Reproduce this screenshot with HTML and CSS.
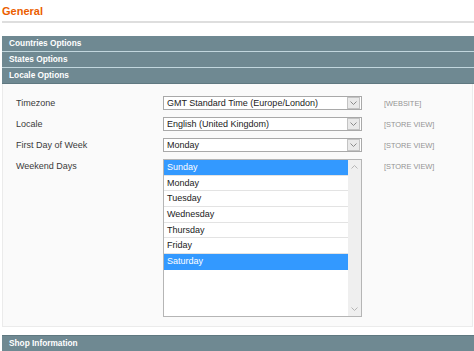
FILE: index.html
```html
<!DOCTYPE html>
<html lang="en">
<head>
    <meta charset="UTF-8">
    <meta name="viewport" content="width=device-width, initial-scale=1.0">
    <title>General Configuration</title>
    <link rel="stylesheet" href="styles.css">
</head>
<body>
    <div class="page">
        <h3 class="title">General</h3>

        <!-- Collapsed sections -->
        <div class="section-head">Countries Options</div>
        <div class="section-head">States Options</div>
        <div class="section-head">Locale Options</div>

        <!-- Locale options fieldset -->
        <div class="fieldset">
            <div class="row">
                <div class="label">Timezone</div>
                <div class="select">
                    <span>GMT Standard Time (Europe/London)</span>
                    <span class="arrow"><svg width="7" height="4" viewBox="0 0 7 4"><path d="M0.5 0.5 L3.5 3.5 L6.5 0.5" fill="none" stroke="#8a8a8a" stroke-width="1"/></svg></span>
                </div>
                <div class="scope">[WEBSITE]</div>
            </div>
            <div class="row">
                <div class="label">Locale</div>
                <div class="select">
                    <span>English (United Kingdom)</span>
                    <span class="arrow"><svg width="7" height="4" viewBox="0 0 7 4"><path d="M0.5 0.5 L3.5 3.5 L6.5 0.5" fill="none" stroke="#8a8a8a" stroke-width="1"/></svg></span>
                </div>
                <div class="scope">[STORE VIEW]</div>
            </div>
            <div class="row">
                <div class="label">First Day of Week</div>
                <div class="select">
                    <span>Monday</span>
                    <span class="arrow"><svg width="7" height="4" viewBox="0 0 7 4"><path d="M0.5 0.5 L3.5 3.5 L6.5 0.5" fill="none" stroke="#8a8a8a" stroke-width="1"/></svg></span>
                </div>
                <div class="scope">[STORE VIEW]</div>
            </div>
            <div class="row">
                <div class="label label-multi">Weekend Days</div>
                <div class="multiselect">
                    <div class="options">
                        <div class="option selected">Sunday</div>
                        <div class="option">Monday</div>
                        <div class="option">Tuesday</div>
                        <div class="option">Wednesday</div>
                        <div class="option">Thursday</div>
                        <div class="option">Friday</div>
                        <div class="option selected last">Saturday</div>
                    </div>
                    <div class="scrollbar">
                        <svg width="7" height="4" viewBox="0 0 7 4"><path d="M0.5 3.5 L3.5 0.5 L6.5 3.5" fill="none" stroke="#b5b5b5" stroke-width="1"/></svg>
                        <svg width="7" height="4" viewBox="0 0 7 4"><path d="M0.5 0.5 L3.5 3.5 L6.5 0.5" fill="none" stroke="#b5b5b5" stroke-width="1"/></svg>
                    </div>
                </div>
                <div class="scope scope-multi">[STORE VIEW]</div>
            </div>
        </div>

        <div class="section-head shop">Shop Information</div>
    </div>
</body>
</html>
```

FILE: styles.css
```css
* {
    box-sizing: border-box;
}

body {
    margin: 0;
    background-color: #fff;
    font-family: "Liberation Sans", Arial, sans-serif;
    color: #333;
}

.page {
    padding-left: 2px;
}

.title {
    margin: 0;
    padding-top: 5px;
    height: 23px;
    line-height: 13px;
    font-size: 11px;
    font-weight: bold;
    color: #eb5e00;
    border-bottom: 2px solid #dedede;
    margin-bottom: 13px;
}

.section-head {
    height: 16px;
    line-height: 15px;
    padding-left: 7px;
    background-color: #6f8992;
    color: #fff;
    font-size: 8.3px;
    font-weight: bold;
    border-bottom: 1px solid #c2d7de;
}

.section-head:nth-child(4) {
    border-bottom: 1px solid #5f7880;
}

.fieldset {
    background-color: #fafafa;
    border: 1px solid #ebebeb;
    border-top: none;
    padding: 12px 0 9px 13px;
    margin-right: 1px;
    margin-bottom: 8px;
}

.row {
    display: flex;
    align-items: center;
    margin-bottom: 7px;
}

.row:last-child {
    margin-bottom: 0;
    align-items: flex-start;
}

.label {
    width: 147px;
    font-size: 9px;
    color: #3a3a3a;
}

.label-multi {
    padding-top: 2px;
}

.select {
    width: 199px;
    height: 14px;
    border: 1px solid #a9a9a9;
    background-color: #fff;
    display: flex;
    align-items: center;
    justify-content: space-between;
    padding: 0 1px 0 3px;
    font-size: 9px;
    color: #222;
}

.arrow {
    width: 13px;
    height: 12px;
    background-color: #e9e9e9;
    border: 1px solid #c3c3c3;
    display: flex;
    align-items: center;
    justify-content: center;
}

.scope {
    margin-left: 22px;
    font-size: 7.4px;
    color: #939393;
}

.scope-multi {
    padding-top: 3px;
}

.multiselect {
    width: 199px;
    height: 158px;
    border: 1px solid #b5b5b5;
    background-color: #fff;
    display: flex;
}

.options {
    flex: 1;
}

.option {
    height: 15.7px;
    line-height: 14.7px;
    padding-left: 3px;
    font-size: 9px;
    color: #222;
    border-bottom: 1px solid #e3e3e3;
}

.option.selected {
    background-color: #3399ff;
    color: #fff;
}

.option.last {
    border-bottom: none;
}

.scrollbar {
    width: 13px;
    background-color: #efefef;
    display: flex;
    flex-direction: column;
    justify-content: space-between;
    align-items: center;
    padding: 5px 0;
}

.shop {
    border-top: 1px solid #5f7880;
    border-bottom: none;
}
```
